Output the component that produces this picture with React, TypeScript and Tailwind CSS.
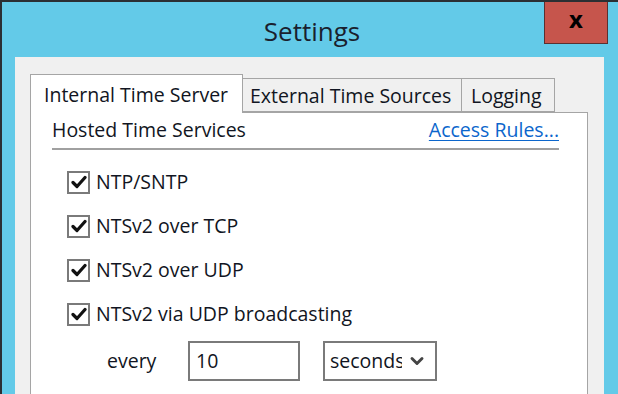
import { ChevronDown } from 'lucide-react'

const font = { fontFamily: '"Open Sans", "Noto Sans", sans-serif' }

const services = [
  'NTP/SNTP',
  'NTSv2 over TCP',
  'NTSv2 over UDP',
  'NTSv2 via UDP broadcasting',
]

function CheckBox({ label }: { label: string }) {
  return (
    <label className="flex items-center gap-[6px] h-[24px]">
      <span className="w-[23px] h-[23px] border-2 border-[#7a7a7a] bg-white flex items-center justify-center">
        <svg width="16" height="14" viewBox="0 0 16 14">
          <path d="M2 7.5 L6 11.5 L14 2.5" fill="none" stroke="#111" strokeWidth="3.2" strokeLinecap="round" strokeLinejoin="round" />
        </svg>
      </span>
      <span>{label}</span>
    </label>
  )
}

export default function App() {
  return (
    <div
      className="w-[618px] h-[394px] overflow-hidden bg-[#63cae8] border-t-2 border-l-2 border-[#2b2f33] text-[#111522] flex flex-col"
      style={font}
    >
      <div className="relative h-[55px] shrink-0 flex items-center justify-center">
        <span className="text-[26px] mt-[4px] ml-[4px] text-[#1a1f2e]">Settings</span>
        <button className="absolute right-[10px] top-[-2px] w-[64px] h-[44px] bg-[#c6554c] border border-[#5b3030] flex items-center justify-center">
          <span className="text-[24px] font-bold text-black leading-none -mt-[6px]">x</span>
        </button>
      </div>

      <div className="ml-[13px] w-[589px] flex-1 bg-[#f0f0f0] pl-[15px] pt-[17px] text-[19.5px]">
        <div className="flex items-end h-[38px]">
          <div className="w-[213px] h-[39px] -mb-px relative z-10 bg-white border border-b-0 border-[#a5a5a5] pl-[13px] pt-[5px]">
            Internal Time Server
          </div>
          <div className="w-[219px] h-[34px] bg-[#f0f0f0] border border-l-0 border-[#a5a5a5] pl-[7px] pt-[2px] whitespace-nowrap">
            External Time Sources
          </div>
          <div className="w-[93px] h-[34px] bg-[#f0f0f0] border border-l-0 border-[#a5a5a5] pl-[9px] pt-[2px]">
            Logging
          </div>
        </div>

        <div className="w-[558px] h-[300px] bg-white border border-[#a5a5a5] pl-[21px] pr-[28px]">
          <div className="flex items-end justify-between h-[37px] pb-[4px] border-b-2 border-[#a0a0a0]">
            <span>Hosted Time Services</span>
            <a href="#" className="text-[#0b66cc] underline underline-offset-[3px]">
              Access Rules...
            </a>
          </div>

          <div className="pl-[15px] pt-[20px] flex flex-col gap-[20px]">
            {services.map((s) => (
              <CheckBox key={s} label={s} />
            ))}
          </div>

          <div className="flex items-center pl-[55px] mt-[15px]">
            <span className="w-[81px]">every</span>
            <div className="w-[112px] h-[40px] border-2 border-[#7a7a7a] bg-white flex items-center pl-[6px]">
              10
            </div>
            <div className="ml-[23px] w-[114px] h-[40px] border-2 border-[#7a7a7a] bg-white flex items-center pl-[5px] pr-[8px] overflow-hidden">
              <span className="w-[72px] overflow-hidden whitespace-nowrap">seconds</span>
              <ChevronDown className="ml-auto" size={20} strokeWidth={3.5} color="#444" />
            </div>
          </div>
        </div>
      </div>
    </div>
  )
}
